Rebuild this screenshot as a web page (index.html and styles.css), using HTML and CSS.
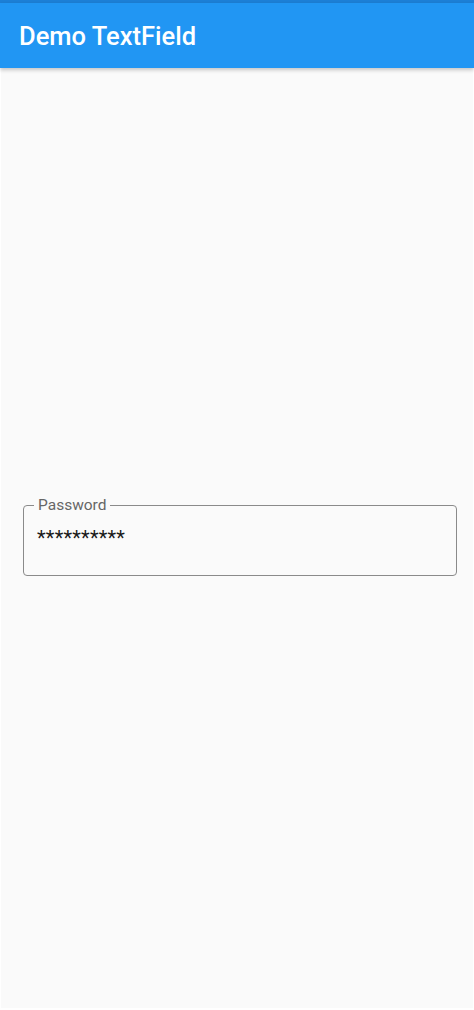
FILE: index.html
```html
<!DOCTYPE html>
<html>
<head>
<meta charset="utf-8">
<link rel="stylesheet" href="styles.css">
</head>
<body>
<div class="screen">
  <div class="status-bar"></div>
  <header class="app-bar">
    <h1 class="title">Demo TextField</h1>
  </header>
  <main class="content">
    <div class="field">
      <span class="field-label">Password</span>
      <div class="field-value">**********</div>
    </div>
  </main>
</div>
</body>
</html>
```
FILE: styles.css
```css
html, body {
  margin: 0;
  padding: 0;
  height: 100%;
}
body {
  background: #ffffff;
  font-family: Roboto, "Noto Sans", sans-serif;
}
.screen {
  height: 1008px;
  margin: 0 1px;
  background: #fafafa;
  display: flex;
  flex-direction: column;
}
.status-bar {
  height: 3px;
  background: #1c7fd6;
  margin: 0 -1px;
}
.app-bar {
  height: 65px;
  background: #2196f3;
  margin: 0 -1px;
  display: flex;
  align-items: center;
  padding: 0 19px;
  box-shadow: 0 2px 4px rgba(0,0,0,0.22);
  position: relative;
  z-index: 1;
}
.title {
  margin: 0;
  color: #ffffff;
  font-size: 25.5px;
  font-weight: 500;
  letter-spacing: 0;
}
.content {
  flex: 1;
  display: flex;
  flex-direction: column;
  justify-content: center;
  padding: 4px 16px 0 22px;
}
.field {
  position: relative;
  height: 71px;
  box-sizing: border-box;
  border: 1.3px solid #8a8a8a;
  border-radius: 4px;
  padding: 0 13px;
}
.field-label {
  position: absolute;
  left: 10px;
  top: -7px;
  padding: 0 4px;
  background: #fafafa;
  font-size: 15.5px;
  color: #666666;
  line-height: 12px;
}
.field-value {
  margin-top: 20px;
  font-size: 20px;
  line-height: 24px;
  color: #1a1a1a;
  letter-spacing: 0.2px;
}
```
